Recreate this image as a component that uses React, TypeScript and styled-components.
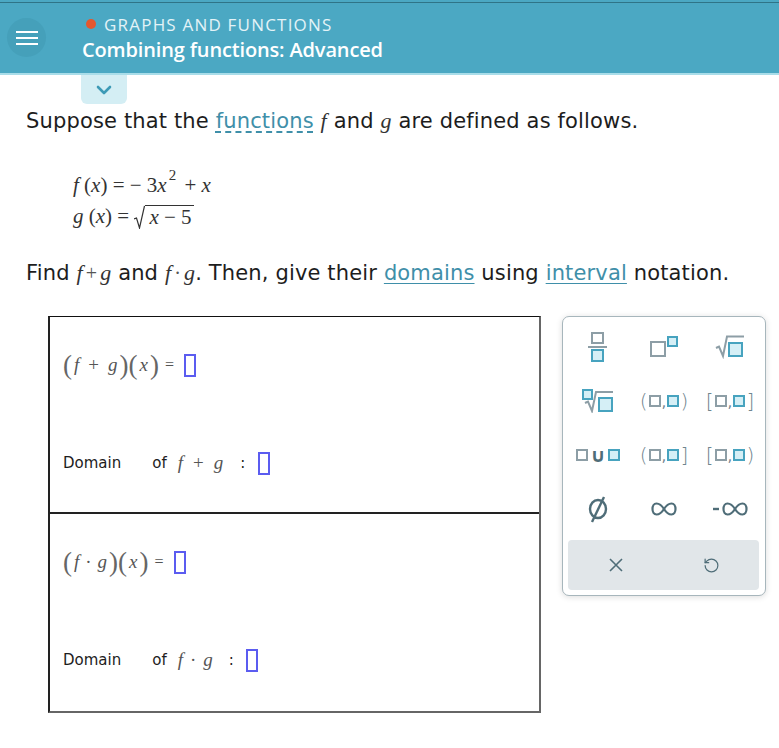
import styled, { createGlobalStyle } from "styled-components";
import { RotateCcw } from "lucide-react";

const GlobalStyle = createGlobalStyle`
  body {
    margin: 0;
    background: #fff;
    font-family: "DejaVu Sans", Verdana, sans-serif;
    color: #1d1d1d;
  }
`;

const GRAY = "#8d9ea6";
const TEAL = "#47a3bf";
const TEAL_FILL = "#d5eff6";
const INK = "#4f6d78";

const Header = styled.header`
  height: 73px;
  display: flex;
  align-items: flex-start;
  padding-left: 7px;
  background: linear-gradient(#4ba8c3 0 2px, #2f7487 2px 3px, #4ba8c3 3px);
  border-bottom: 2px solid #a9dde9;
`;

const MenuButton = styled.div`
  width: 39px;
  height: 39px;
  margin-top: 18px;
  border-radius: 50%;
  background: #45a0ba;
  display: flex;
  align-items: center;
  justify-content: center;
`;

const TitleBlock = styled.div`
  margin-left: 36px;
  padding-top: 13px;
  font-family: "Open Sans", "Liberation Sans", sans-serif;
`;

const Topic = styled.div`
  display: flex;
  align-items: center;
  height: 22px;
  font-size: 17px;
  font-weight: 500;
  color: #e3f3f7;
  letter-spacing: 1.2px;
`;

const Dot = styled.span`
  width: 10px;
  height: 10px;
  margin: 0 8px 0 4px;
  border-radius: 50%;
  background: #e4572e;
`;

const Title = styled.div`
  margin-top: 2px;
  line-height: 26px;
  font-size: 20px;
  font-weight: 600;
  letter-spacing: -0.15px;
  color: #fff;
`;

const Tab = styled.div`
  width: 46px;
  height: 29px;
  margin-left: 81px;
  border-radius: 0 0 6px 6px;
  background: #d4eef4;
  display: flex;
  align-items: center;
  justify-content: center;
`;

const Main = styled.main`
  padding-left: 26px;
`;

const Para = styled.p`
  margin: 0;
  font-size: 21px;
  line-height: 24px;
  letter-spacing: 0.15px;
`;

const Link = styled.span<{ $dashed?: boolean }>`
  color: #3f8fa9;
  text-decoration: underline;
  text-decoration-style: ${({ $dashed }) => ($dashed ? "dashed" : "solid")};
  text-underline-offset: 3px;
  text-decoration-thickness: ${({ $dashed }) => ($dashed ? 2 : 1)}px;
`;

const M = styled.span`
  font-family: "Liberation Serif", "Times New Roman", serif;
  font-style: italic;
  font-size: 22px;
  color: #333;
`;

const Up = styled.span`
  font-family: "Liberation Serif", "Times New Roman", serif;
  font-size: 20px;
  color: #555;
  margin: 0 3px;
`;

const Formulas = styled.div`
  margin: 37px 0 29px 47px;
  font-family: "Liberation Serif", "Times New Roman", serif;
  font-size: 21px;
  color: #333;
`;

const FormulaLine = styled.div`
  height: 31px;
  display: flex;
  align-items: center;
  white-space: pre;
`;

const Sup = styled.span`
  font-size: 15px;
  position: relative;
  top: -10px;
  margin: 0 3px 0 2px;
`;

const Radicand = styled.span`
  display: inline-block;
  border-top: 1px solid #333;
  padding: 0 2px 0 4px;
  line-height: 22px;
`;

const Workspace = styled.div`
  display: flex;
  align-items: flex-start;
  margin-top: 31px;
  padding-left: 48px;
  gap: 21px;
`;

const AnswerPanel = styled.div`
  width: 489px;
  border-top: 1px solid #111;
  border-left: 2px solid #222;
  border-right: 2px solid #666;
  border-bottom: 2px solid #666;
`;

const Section = styled.section<{ $last?: boolean }>`
  height: 197px;
  padding: 35px 0 0 13px;
  box-sizing: border-box;
  border-bottom: ${({ $last }) => ($last ? "none" : "2px solid #222")};
`;

const Row = styled.div<{ $gap?: number }>`
  display: flex;
  align-items: center;
  height: 26px;
  margin-top: ${({ $gap }) => $gap ?? 0}px;
  white-space: pre;
`;

const Paren = styled.span`
  font-family: "Liberation Serif", serif;
  font-size: 27px;
  color: #666;
  line-height: 26px;
`;

const MathVar = styled.span<{ $size?: number }>`
  font-family: "Liberation Serif", serif;
  font-style: italic;
  font-size: ${({ $size }) => $size ?? 19}px;
  color: #555;
  margin: 0 2px;
`;

const MathOp = styled.span<{ $space?: number; $size?: number }>`
  font-family: "Liberation Serif", serif;
  font-size: ${({ $size }) => $size ?? 19}px;
  color: #555;
  margin: 0 ${({ $space }) => $space ?? 7}px;
`;

const Blank = styled.span<{ $left: number }>`
  display: inline-block;
  width: 8px;
  height: 19px;
  margin-left: ${({ $left }) => $left}px;
  border: 2px solid #5b5cf0;
`;

const Label = styled.span<{ $left?: number }>`
  font-size: 15px;
  color: #1d1d1d;
  margin-left: ${({ $left }) => $left ?? 0}px;
`;

const Keypad = styled.div`
  width: 198px;
  padding: 3px 2px 5px 2px;
  border: 1px solid #a7b6bc;
  border-radius: 7px;
  box-shadow: 0 1px 6px rgba(0, 0, 0, 0.14);
  background: #fff;
`;

const KeyGrid = styled.div`
  display: grid;
  grid-template-columns: repeat(3, 66px);
  grid-auto-rows: 54px;
`;

const Key = styled.div`
  display: flex;
  align-items: center;
  justify-content: center;
  color: ${INK};
`;

const ActionBar = styled.div`
  display: grid;
  grid-template-columns: 1fr 1fr;
  height: 50px;
  margin: 4px 4px 0 3px;
  border-radius: 4px;
  background: #e1e6e9;
`;

const Sq = styled.span<{ $teal?: boolean; $size?: number }>`
  display: inline-block;
  box-sizing: border-box;
  width: ${({ $size }) => $size ?? 12}px;
  height: ${({ $size }) => $size ?? 12}px;
  border: 2px solid ${({ $teal }) => ($teal ? TEAL : GRAY)};
  background: ${({ $teal }) => ($teal ? TEAL_FILL : "transparent")};
`;

const IntervalWrap = styled.span`
  display: inline-flex;
  align-items: center;
  gap: 1px;
`;

const Bracket = styled.span`
  font-family: "DejaVu Sans", sans-serif;
  font-weight: 300;
  font-size: 20px;
  color: #6f858e;
  line-height: 22px;
`;

const Comma = styled.span`
  font-size: 15px;
  color: #6f858e;
  margin: 2px 0 0 0;
`;

const Union = styled.span`
  font-size: 19px;
  font-weight: bold;
  color: ${INK};
  margin: 0 2px;
`;

const Interval = ({ open, close }: { open: string; close: string }) => (
  <IntervalWrap>
    <Bracket>{open}</Bracket>
    <Sq />
    <Comma>,</Comma>
    <Sq $teal />
    <Bracket>{close}</Bracket>
  </IntervalWrap>
);

const FractionIcon = () => (
  <svg width="20" height="31" viewBox="0 0 20 31">
    <rect x="4" y="1" width="11" height="10" fill="none" stroke={GRAY} strokeWidth="2" />
    <line x1="0" y1="15" x2="19" y2="15" stroke={GRAY} strokeWidth="2" />
    <rect x="4" y="18" width="11" height="11" fill={TEAL_FILL} stroke={TEAL} strokeWidth="2" />
  </svg>
);

const PowerIcon = () => (
  <svg width="30" height="24" viewBox="0 0 30 24">
    <rect x="2" y="7" width="14" height="14" fill="none" stroke={GRAY} strokeWidth="2" />
    <rect x="19" y="2" width="9" height="9" fill={TEAL_FILL} stroke={TEAL} strokeWidth="2" />
  </svg>
);

const SqrtIcon = () => (
  <svg width="30" height="24" viewBox="0 0 30 24">
    <path d="M1 13 L4 11.5 L8 21 L12 1.5 L29 1.5" fill="none" stroke={GRAY} strokeWidth="2" />
    <rect x="14" y="8" width="13" height="13" fill={TEAL_FILL} stroke={TEAL} strokeWidth="2" />
  </svg>
);

const RootIcon = () => (
  <svg width="32" height="24" viewBox="0 0 32 24">
    <rect x="1" y="1" width="9" height="9" fill={TEAL_FILL} stroke={TEAL} strokeWidth="2" />
    <path d="M3 14 L6 12.5 L10 22 L14 3 L31 3" fill="none" stroke={GRAY} strokeWidth="2" />
    <rect x="17" y="9" width="13" height="13" fill={TEAL_FILL} stroke={TEAL} strokeWidth="2" />
  </svg>
);

const EmptySetIcon = () => (
  <svg width="22" height="30" viewBox="0 0 22 30">
    <ellipse cx="11" cy="15" rx="8" ry="9" fill="none" stroke={INK} strokeWidth="2.4" />
    <line x1="17" y1="3" x2="5" y2="28" stroke={INK} strokeWidth="2.4" />
  </svg>
);

const InfinityIcon = ({ minus }: { minus?: boolean }) => (
  <svg width={minus ? 36 : 26} height="16" viewBox={minus ? "-10 0 36 16" : "0 0 26 16"}>
    {minus && <line x1="-9" y1="8" x2="-3" y2="8" stroke={INK} strokeWidth="2.4" />}
    <path
      d="M13 8 C10.5 4, 7.5 2.5, 5.5 2.5 C3 2.5, 1.5 5, 1.5 8 C1.5 11, 3 13.5, 5.5 13.5 C7.5 13.5, 10.5 12, 13 8 C15.5 4, 18.5 2.5, 20.5 2.5 C23 2.5, 24.5 5, 24.5 8 C24.5 11, 23 13.5, 20.5 13.5 C18.5 13.5, 15.5 12, 13 8 Z"
      fill="none"
      stroke={INK}
      strokeWidth="2.2"
    />
  </svg>
);

const CloseIcon = () => (
  <svg width="14" height="14" viewBox="0 0 14 14">
    <path d="M1 1 L13 13 M13 1 L1 13" stroke={INK} strokeWidth="1.6" />
  </svg>
);

const App = () => {
  return (
    <>
      <GlobalStyle />
      <Header>
        <MenuButton>
          <svg width="22" height="16" viewBox="0 0 22 16">
            <path d="M0 2 H22 M0 8 H22 M0 14 H22" stroke="#fff" strokeWidth="2" />
          </svg>
        </MenuButton>
        <TitleBlock>
          <Topic>
            <Dot />
            GRAPHS AND FUNCTIONS
          </Topic>
          <Title>Combining functions: Advanced</Title>
        </TitleBlock>
      </Header>
      <Tab>
        <svg width="16" height="10" viewBox="0 0 16 10">
          <path d="M2 2 L8 8 L14 2" fill="none" stroke="#3d9ab6" strokeWidth="2.6" strokeLinecap="round" strokeLinejoin="round" />
        </svg>
      </Tab>
      <Main>
        <Para style={{ marginTop: 5 }}>
          Suppose that the <Link $dashed>functions</Link> <M>f</M> and <M>g</M> are defined as follows.
        </Para>
        <Formulas>
          <FormulaLine>
            <i>f</i> (<i>x</i>) = − 3<i>x</i>
            <Sup>2</Sup> + <i>x</i>
          </FormulaLine>
          <FormulaLine>
            <i>g</i> (<i>x</i>) = <svg width="11" height="24" viewBox="0 0 11 24"><path d="M0 14 L2.5 13 L5.5 23 L10.5 1" fill="none" stroke="#333" strokeWidth="1.2" /></svg>
            <Radicand>
              <i>x</i> − 5
            </Radicand>
          </FormulaLine>
        </Formulas>
        <Para>
          Find <M>f</M>
          <Up>+</Up>
          <M>g</M> and <M>f</M>
          <Up>·</Up>
          <M>g</M>. Then, give their <Link>domains</Link> using <Link>interval</Link> notation.
        </Para>
      </Main>
      <Workspace>
        <AnswerPanel>
          <Section>
            <Row>
              <Paren>(</Paren>
              <MathVar>f</MathVar>
              <MathOp>+</MathOp>
              <MathVar>g</MathVar>
              <Paren>)</Paren>
              <Paren>(</Paren>
              <MathVar>x</MathVar>
              <Paren>)</Paren>
              <MathOp $space={6} $size={16}>=</MathOp>
              <Blank $left={4} />
            </Row>
            <Row $gap={72}>
              <Label>Domain</Label>
              <Label $left={31}>of</Label>
              <MathVar style={{ marginLeft: 11 }}>f</MathVar>
              <MathOp $space={8}>+</MathOp>
              <MathVar>g</MathVar>
              <Label $left={15}>:</Label>
              <Blank $left={13} />
            </Row>
          </Section>
          <Section $last>
            <Row>
              <Paren>(</Paren>
              <MathVar>f</MathVar>
              <MathOp $space={4}>·</MathOp>
              <MathVar>g</MathVar>
              <Paren>)</Paren>
              <Paren>(</Paren>
              <MathVar>x</MathVar>
              <Paren>)</Paren>
              <MathOp $space={6} $size={16}>=</MathOp>
              <Blank $left={4} />
            </Row>
            <Row $gap={72}>
              <Label>Domain</Label>
              <Label $left={31}>of</Label>
              <MathVar style={{ marginLeft: 11 }}>f</MathVar>
              <MathOp $space={5}>·</MathOp>
              <MathVar>g</MathVar>
              <Label $left={14}>:</Label>
              <Blank $left={12} />
            </Row>
          </Section>
        </AnswerPanel>
        <Keypad>
          <KeyGrid>
            <Key><FractionIcon /></Key>
            <Key><PowerIcon /></Key>
            <Key><SqrtIcon /></Key>
            <Key><RootIcon /></Key>
            <Key><Interval open="(" close=")" /></Key>
            <Key><Interval open="[" close="]" /></Key>
            <Key>
              <Sq />
              <Union>∪</Union>
              <Sq $teal />
            </Key>
            <Key><Interval open="(" close="]" /></Key>
            <Key><Interval open="[" close=")" /></Key>
            <Key><EmptySetIcon /></Key>
            <Key><InfinityIcon /></Key>
            <Key><InfinityIcon minus /></Key>
          </KeyGrid>
          <ActionBar>
            <Key><CloseIcon /></Key>
            <Key><RotateCcw size={17} strokeWidth={1.7} color={INK} /></Key>
          </ActionBar>
        </Keypad>
      </Workspace>
    </>
  );
};

export default App;
